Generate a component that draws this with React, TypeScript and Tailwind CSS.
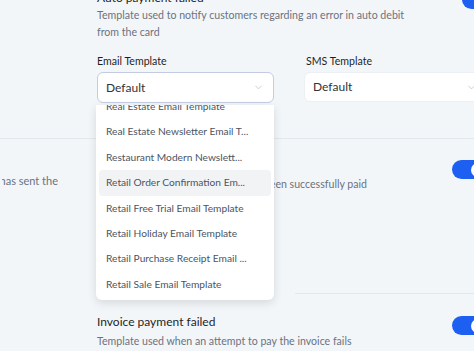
import { ChevronDown } from 'lucide-react';

const items = [
  'Real Estate Email Template',
  'Real Estate Newsletter Email T...',
  'Restaurant Modern Newslett...',
  'Retail Order Confirmation Em...',
  'Retail Free Trial Email Template',
  'Retail Holiday Email Template',
  'Retail Purchase Receipt Email ...',
  'Retail Sale Email Template',
];

function Toggle() {
  return (
    <div className="flex h-[19px] w-[36px] shrink-0 items-center justify-end rounded-full bg-[#1d5ff0] px-[3px]">
      <div className="h-[14px] w-[14px] rounded-full bg-white" />
    </div>
  );
}

export default function App() {
  return (
    <div
      className="relative h-[351px] w-[474px] overflow-hidden bg-[#f3f6f9]"
      style={{ fontFamily: 'Lato, "Open Sans", sans-serif' }}
    >
      {/* Auto payment failed */}
      <div className="-mt-[10px] flex h-[149px] border-b border-[#e4e8ee]">
        <div className="w-[97px] shrink-0" />
        <div className="flex flex-1 flex-col">
          <div className="flex items-start justify-between">
            <h3 className="text-[12px] leading-4 text-[#1f1f1f]">Auto payment failed</h3>
            <div className="-mr-[14px]">
              <Toggle />
            </div>
          </div>
          <p className="-mt-[2px] w-[320px] text-[10.6px] leading-[17px] text-[#6b7280]">
            Template used to notify customers regarding an error in auto debit from the card
          </p>
          <div className="mt-[12px] flex gap-[31px]">
            <div className="flex w-[177px] flex-col gap-[3px]">
              <span className="text-[10.6px] leading-4 text-[#1f1f1f]">Email Template</span>
              <div className="flex h-[31px] items-center justify-between rounded-md border-[1.5px] border-[#c3cce0] bg-white pl-[8px] pr-[9px]">
                <span className="text-[12px] text-[#333]">Default</span>
                <ChevronDown className="h-[11px] w-[11px] text-[#b4b9c2]" strokeWidth={1.5} />
              </div>
            </div>
            <div className="-ml-px flex w-[180px] flex-col gap-[3px]">
              <span className="pl-[2px] text-[10.6px] leading-4 text-[#1f1f1f]">SMS Template</span>
              <div className="flex h-[30px] items-center justify-between rounded-md border border-[#eceff3] bg-white pl-[8px] pr-[6px]">
                <span className="text-[12px] text-[#333]">Default</span>
                <ChevronDown className="h-[11px] w-[11px] text-[#b4b9c2]" strokeWidth={1.5} />
              </div>
            </div>
          </div>
        </div>
      </div>

      {/* Payment successful (behind the list) */}
      <div className="flex h-[154px] items-start">
        <div className="ml-[2px] mt-[34px] flex w-[56px] shrink-0 justify-end overflow-hidden whitespace-nowrap">
          <span className="text-[11px] leading-4 text-[#6b7280]">customer has sent the</span>
        </div>
        <div className="ml-[39px] flex flex-1 flex-col">
          <div className="flex items-start justify-between pt-[21px]">
            <h3 className="text-[12px] leading-4 text-[#1f1f1f]">Payment successful</h3>
            <div className="-mr-[14px]">
              <Toggle />
            </div>
          </div>
          <div className="-mt-[3px] flex w-[270px] justify-end overflow-hidden whitespace-nowrap">
            <span className="text-[10.6px] leading-4 text-[#6b7280]">
              Template used when the invoice has been successfully paid
            </span>
          </div>
        </div>
      </div>

      {/* Invoice payment failed */}
      <div className="ml-[295px] border-t border-[#e4e8ee]" />
      <div className="flex">
        <div className="w-[97px] shrink-0" />
        <div className="flex flex-1 flex-col pt-[20px]">
          <div className="flex items-start justify-between">
            <h3 className="text-[12px] leading-4 text-[#1f1f1f]">Invoice payment failed</h3>
            <div className="-mr-[14px] mt-[2px]">
              <Toggle />
            </div>
          </div>
          <p className="-mt-[2px] text-[10.6px] leading-4 text-[#6b7280]">
            Template used when an attempt to pay the invoice fails
          </p>
        </div>
      </div>

      {/* Open template list */}
      <div className="absolute left-[96px] top-[105px] h-[195px] w-[178px] overflow-hidden rounded-b-md bg-white shadow-[0_3px_10px_rgba(0,0,0,0.12)]">
        <div className="-mt-[11px] flex flex-col px-[3px]">
          {items.map((item, i) => (
            <div
              key={item}
              className={`flex h-[25.4px] items-center rounded pl-[7px] text-[10.2px] text-[#4b5563] whitespace-nowrap ${
                i === 3 ? 'bg-[#f2f3f5]' : ''
              }`}
            >
              {item}
            </div>
          ))}
        </div>
      </div>
    </div>
  );
}
